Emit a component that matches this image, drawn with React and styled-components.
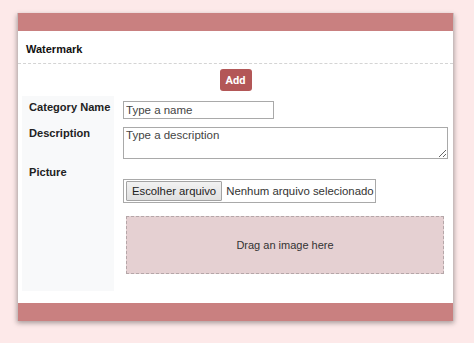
import React from "react";
import styled, { createGlobalStyle } from "styled-components";

const Global = createGlobalStyle`
  html, body { margin: 0; padding: 0; }
  body {
    background: #fde9e9;
    font-family: "Liberation Sans", Arial, sans-serif;
    color: #222;
    width: 474px;
    height: 343px;
    overflow: hidden;
  }
`;

const Card = styled.div`
  margin: 13px 0 0 17px;
  width: 437px;
  box-sizing: border-box;
  background: #fff;
  border-left: 1px solid #c9bcbc;
  border-right: 1px solid #c9bcbc;
  box-shadow: 0 2px 5px rgba(0, 0, 0, 0.35);
`;

const Bar = styled.div`
  height: 18px;
  background: #c98080;
`;

const TitleRow = styled.div`
  height: 33px;
  box-sizing: border-box;
  padding: 11px 8px 0;
  border-bottom: 1px dashed #d4d4d4;
  font-size: 11px;
  line-height: 14px;
  font-weight: bold;
  color: #111;
`;

const ActionRow = styled.div`
  display: flex;
  justify-content: center;
  padding-top: 5px;
`;

const AddButton = styled.button`
  width: 32px;
  height: 22px;
  padding: 0;
  border: none;
  border-radius: 3px;
  background: #b35757;
  color: #fff;
  font-family: Roboto, "Liberation Sans", sans-serif;
  font-weight: bold;
  font-size: 11px;
`;

const Body = styled.div`
  display: flex;
  padding: 5px 4px 12px 4px;
`;

const Side = styled.div`
  flex: 0 0 92px;
  height: 195px;
  box-sizing: border-box;
  background: #f8f9fa;
  padding: 4px 0 0 7px;
  display: flex;
  flex-direction: column;
`;

const Label = styled.div`
  font-size: 11.1px;
  line-height: 14px;
  font-weight: bold;
  color: #222;
  white-space: nowrap;
  margin-top: ${(p) => p.$gap || 0}px;
`;

const Main = styled.div`
  flex: 1;
  min-width: 0;
  margin-left: 9px;
  display: flex;
  flex-direction: column;
  align-items: flex-start;
`;

const fieldText = `
  font-family: "Liberation Sans", Arial, sans-serif;
  font-size: 11.5px;
  color: #333;
  &::placeholder { color: #444; opacity: 1; }
`;

const TextInput = styled.input`
  ${fieldText}
  margin-top: 5px;
  width: 151px;
  height: 18px;
  box-sizing: border-box;
  border: 1px solid #a9a9a9;
  padding: 0 2px;
  outline: none;
`;

const TextArea = styled.textarea`
  ${fieldText}
  margin-top: 8px;
  width: 325px;
  height: 32px;
  box-sizing: border-box;
  border: 1px solid #a9a9a9;
  padding: 1px 2px;
  outline: none;
  resize: both;
`;

const FileBox = styled.div`
  margin-top: 20px;
  width: 253px;
  height: 24px;
  box-sizing: border-box;
  border: 1px solid #a9a9a9;
  display: flex;
  align-items: center;
  padding-left: 2px;
  gap: 4px;
`;

const FileButton = styled.div`
  height: 20px;
  box-sizing: border-box;
  padding: 0 5px;
  border: 1px solid #a3a3a3;
  border-radius: 1px;
  background: linear-gradient(#f2f2f2, #e0e0e0);
  font-size: 11.3px;
  line-height: 18px;
  color: #222;
  white-space: nowrap;
`;

const FileText = styled.span`
  font-size: 11.4px;
  color: #333;
  white-space: nowrap;
`;

const DropZone = styled.div`
  margin: 13px 0 0 3px;
  width: 318px;
  height: 58px;
  box-sizing: border-box;
  background: #e5d0d2;
  border: 1px dashed #b5a6a8;
  display: flex;
  align-items: center;
  justify-content: center;
  font-size: 11px;
  color: #333;
`;

export default function App() {
  return (
    <>
      <Global />
      <Card>
        <Bar />
        <TitleRow>Watermark</TitleRow>
        <ActionRow>
          <AddButton>Add</AddButton>
        </ActionRow>
        <Body>
          <Side>
            <Label>Category Name</Label>
            <Label $gap={12}>Description</Label>
            <Label $gap={25}>Picture</Label>
          </Side>
          <Main>
            <TextInput placeholder="Type a name" />
            <TextArea placeholder="Type a description" />
            <FileBox>
              <FileButton>Escolher arquivo</FileButton>
              <FileText>Nenhum arquivo selecionado</FileText>
            </FileBox>
            <DropZone>Drag an image here</DropZone>
          </Main>
        </Body>
        <Bar />
      </Card>
    </>
  );
}
